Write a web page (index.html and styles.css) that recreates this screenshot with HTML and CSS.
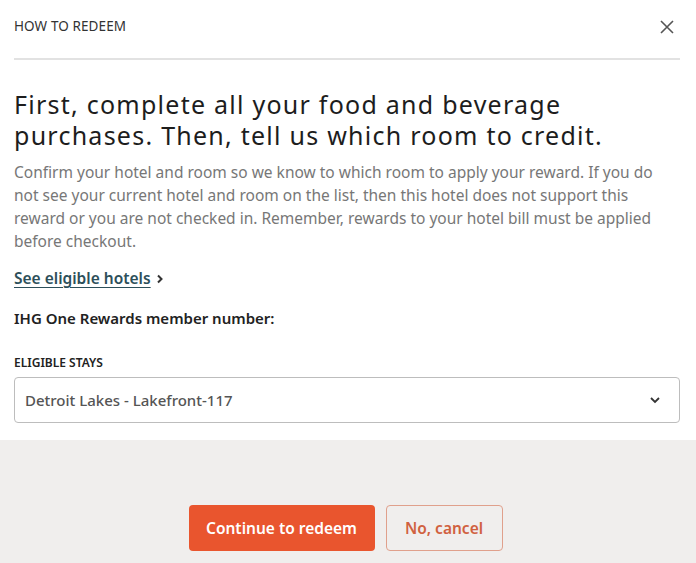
FILE: index.html
```html
<!DOCTYPE html>
<html lang="en">
<head>
<meta charset="utf-8">
<title>How to redeem</title>
<link rel="stylesheet" href="styles.css">
</head>
<body>
<div class="modal">
  <div class="content">
    <div class="header">
      <span class="eyebrow">HOW TO REDEEM</span>
      <button class="close" aria-label="Close">
        <svg width="16" height="16" viewBox="0 0 16 16"><path d="M2 2 L14 14 M14 2 L2 14" stroke="#555" stroke-width="1.6" fill="none"/></svg>
      </button>
    </div>
    <h1 class="title">First, complete all your food and beverage purchases. Then, tell us which room to credit.</h1>
    <p class="desc">Confirm your hotel and room so we know to which room to apply your reward. If you do not see your current hotel and room on the list, then this hotel does not support this reward or you are not checked in. Remember, rewards to your hotel bill must be applied before checkout.</p>
    <a class="link" href="#">See eligible hotels</a><span class="chev">
      <svg width="8" height="10" viewBox="0 0 8 10"><path d="M2 1.5 L5.5 5 L2 8.5" stroke="#333" stroke-width="2" fill="none"/></svg></span>
    <div class="member">IHG One Rewards member number:</div>
    <div class="label">ELIGIBLE STAYS</div>
    <div class="select">
      <span>Detroit Lakes - Lakefront-117</span>
      <svg width="12" height="8" viewBox="0 0 12 8"><path d="M2 2 L6 6 L10 2" stroke="#333" stroke-width="1.8" fill="none"/></svg>
    </div>
  </div>
  <div class="footer">
    <button class="btn primary">Continue to redeem</button>
    <button class="btn secondary">No, cancel</button>
  </div>
</div>
</body>
</html>
```
FILE: styles.css
```css
* { box-sizing: border-box; }
html, body { margin: 0; padding: 0; background: #fff; }
body { font-family: "Noto Sans", "Open Sans", sans-serif; color: #222; }
.modal { width: 696px; height: 563px; display: flex; flex-direction: column; }
.content { padding: 0 16px 17px 14px; }
.header {
  height: 60px; display: flex; justify-content: space-between; align-items: flex-start;
  border-bottom: 2px solid #e2e2e2; padding-top: 17px;
}
.eyebrow { font-size: 13.5px; color: #333; letter-spacing: 0.1px; }
.close { background: none; border: 0; padding: 0; margin: 2px 5px 0 0; width: 16px; height: 16px; }
.title {
  max-width: 620px; font-size: 25px; font-weight: 400; line-height: 31px; letter-spacing: 1.25px;
  margin: 29px 0 10px; color: #1d1d1d;
}
.desc { font-size: 15.5px; line-height: 23px; color: #777; margin: 0 0 13px; }
.link { font-size: 15.5px; line-height: 24px; font-weight: 600; color: #2d4f5a; text-decoration: underline; text-underline-offset: 3px; }
.chev { display: inline-block; margin-left: 5px; }
.member { font-size: 15px; line-height: 24px; font-weight: 600; color: #222; margin-top: 16px; }
.label { font-size: 12px; line-height: 16px; font-weight: 600; color: #222; margin-top: 25px; }
.select {
  margin-top: 6px; height: 46px; border: 1px solid #bdbdbd; border-radius: 4px;
  display: flex; align-items: center; justify-content: space-between; padding: 0 18px 0 10px;
  font-size: 15px; font-weight: 500; color: #555;
}
.footer {
  flex: 1; background: #f0eeed; display: flex; justify-content: center; align-items: flex-start;
  gap: 11px; padding-top: 65px; padding-right: 5px;
}
.btn { height: 46px; border-radius: 4px; font-family: inherit; font-size: 15.5px; font-weight: 600; padding: 0; }
.primary { width: 186px; background: #e9552e; color: #fff; border: 0; }
.secondary { width: 117px; background: transparent; color: #d0613f; border: 1px solid #e0a08c; }
```
